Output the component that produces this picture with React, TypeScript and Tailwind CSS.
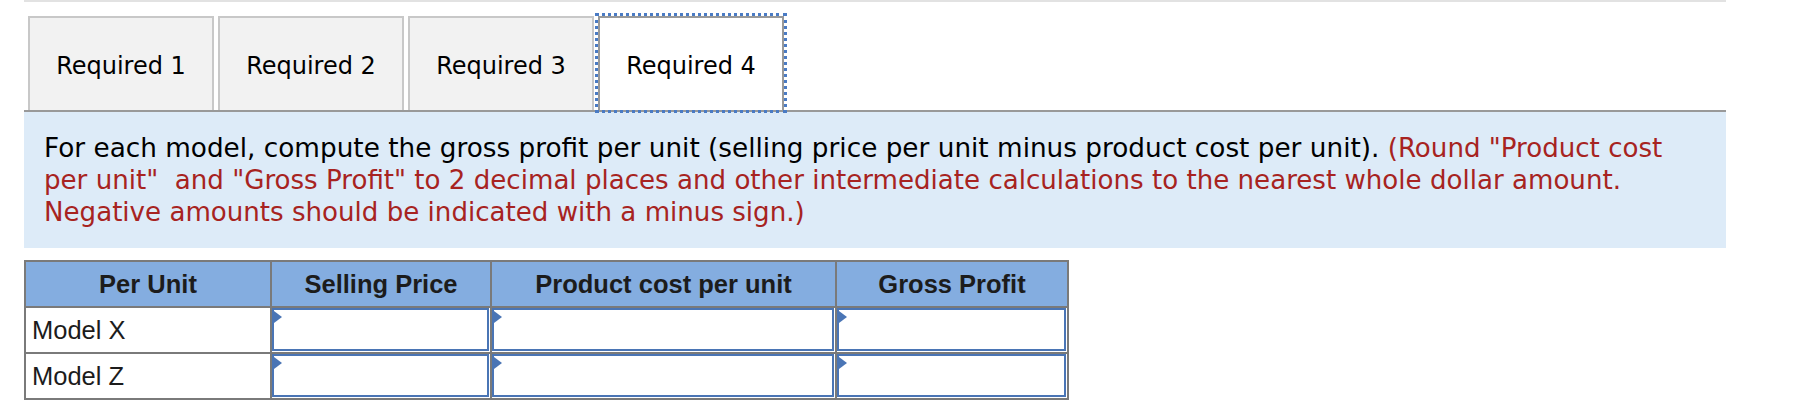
const tabs = ["Required 1", "Required 2", "Required 3", "Required 4"];

const cols = ["Per Unit", "Selling Price", "Product cost per unit", "Gross Profit"];
const rows = ["Model X", "Model Z"];

// blue input box with the little marker in the corner
const Cell = () => (
  <div className="bg-white flex">
    <div className="relative flex-1 mr-px mb-px border-2 border-[#4a75b5] bg-white">
      <span className="absolute left-0 top-px w-0 h-0 border-y-[6px] border-y-transparent border-l-[8px] border-l-[#4a75b5]" />
    </div>
  </div>
);

export default function App() {
  return (
    <div className="w-[1796px] h-[416px] bg-white pl-6 pr-[70px] font-['DejaVu_Sans',Verdana,sans-serif]">
      <div className="h-[2px] bg-[#e2e2e2]" />

      {/* tabs */}
      <div className="flex items-end gap-1 pl-1 pt-[14px] border-b-2 border-[#999]">
        {tabs.map((t, i) =>
          i === 3 ? (
            <div
              key={t}
              className="relative z-10 w-[186px] h-[94px] pt-[3px] flex items-center justify-center bg-white border-2 border-b-0 border-[#999] outline-[3px] outline-dotted outline-[#4a7bc4] text-[24px] text-black"
            >
              {t}
            </div>
          ) : (
            <div
              key={t}
              className="w-[186px] h-[94px] pt-[3px] flex items-center justify-center bg-[#f2f2f2] border-2 border-b-0 border-[#c8c8c8] text-[24px] text-black"
            >
              {t}
            </div>
          )
        )}
      </div>

      {/* instructions */}
      <div className="bg-[#ddebf8] pt-[20px] pb-[20px] px-5 text-[26.3px] leading-[32px] text-black">
        For each model, compute the gross profit per unit (selling price per unit minus product cost per unit).{" "}
        <span className="text-[#a72321] text-[26.1px]">
          (Round "Product cost per unit"&nbsp; and "Gross Profit" to 2 decimal places and other intermediate calculations
          to the nearest whole dollar amount. Negative amounts should be indicated with a minus sign.)
        </span>
      </div>

      {/* table */}
      <div className="mt-3 w-[1045px] grid grid-cols-[244px_218px_343px_230px] auto-rows-[44px] gap-[2px] p-[2px] bg-[#7a7a7a] font-['Liberation_Sans',Arial,sans-serif] text-[25.5px] text-[#1c1c1c]">
        {cols.map((c) => (
          <div key={c} className="bg-[#84ade0] flex items-center justify-center font-bold">
            {c}
          </div>
        ))}
        {rows.map((r) => (
          <>
            <div key={r} className="bg-white flex items-center pl-[6px]">
              {r}
            </div>
            <Cell />
            <Cell />
            <Cell />
          </>
        ))}
      </div>
    </div>
  );
}
